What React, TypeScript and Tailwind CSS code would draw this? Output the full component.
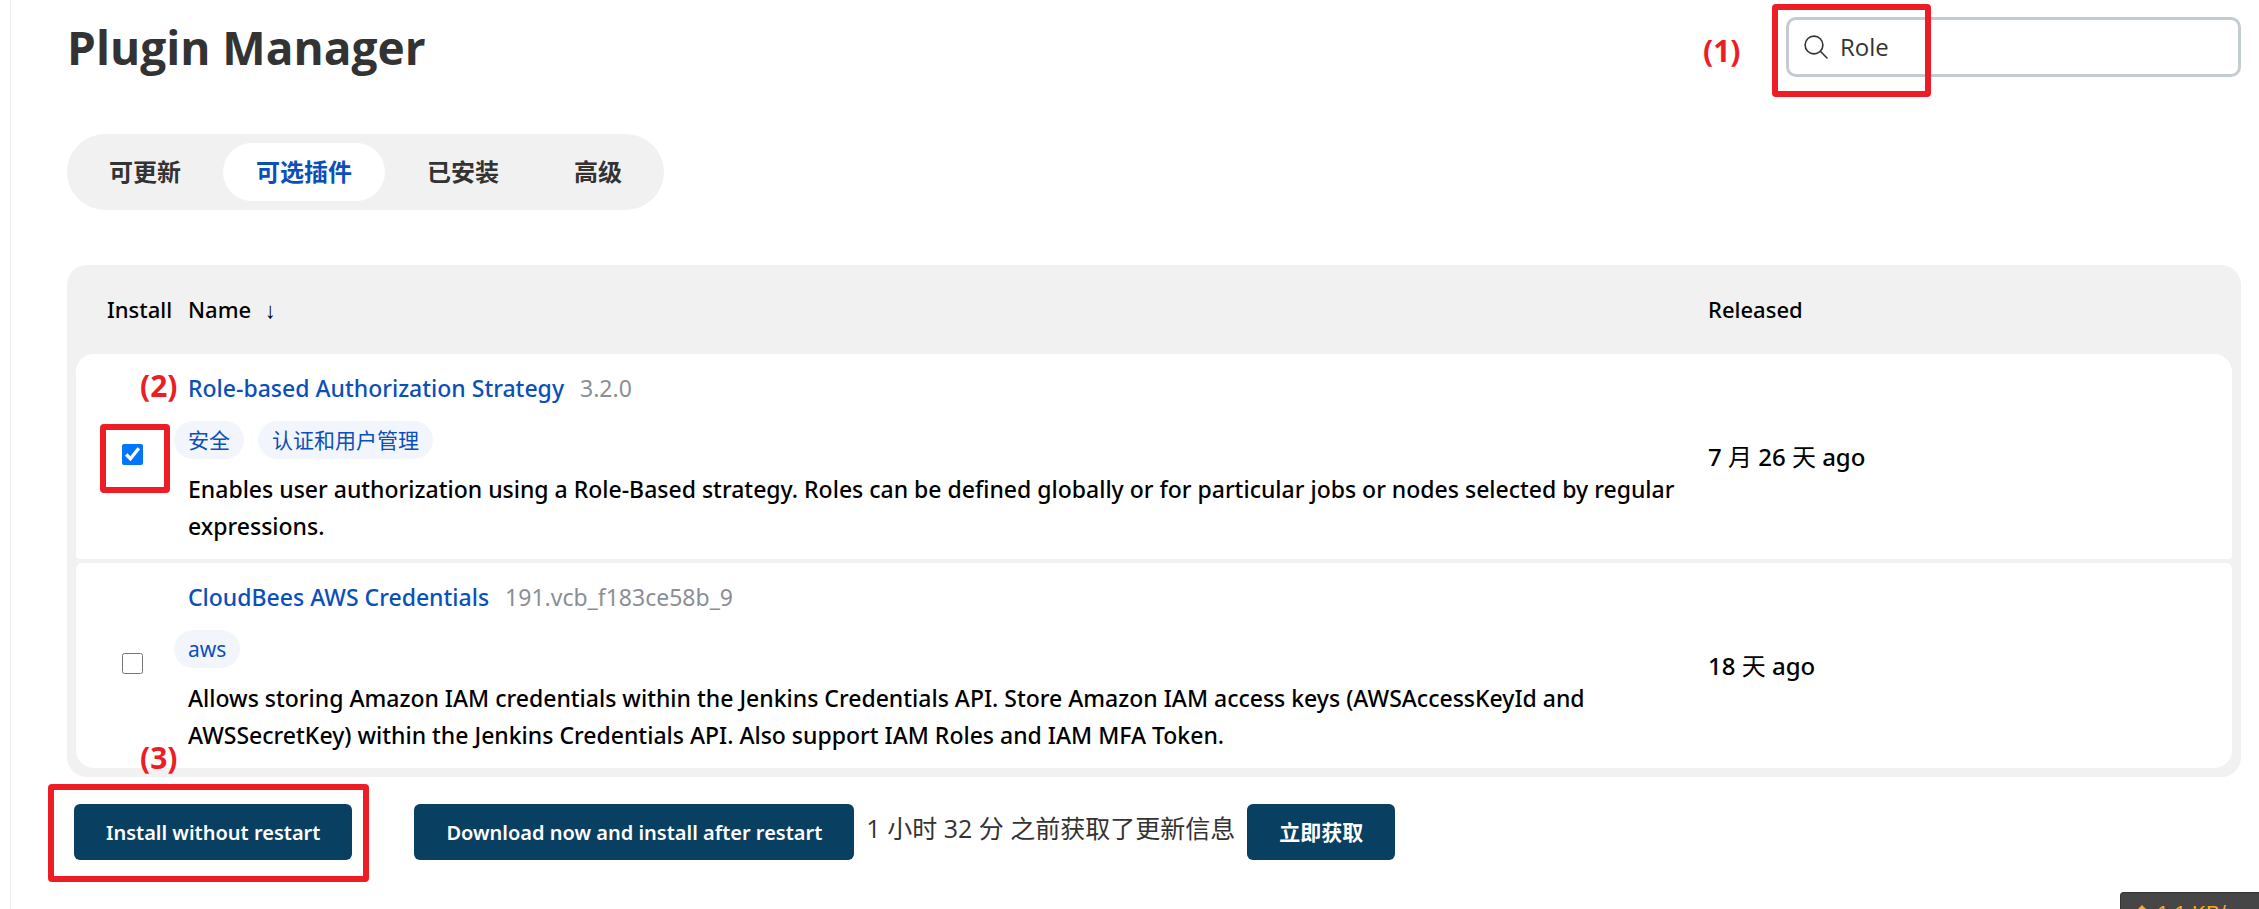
import { useState } from 'react';

type Plugin = {
  id: string;
  name: string;
  version: string;
  tags: string[];
  description: string;
  released: string;
  step?: string;
};

const plugins: Plugin[] = [
  {
    id: 'role-strategy',
    name: 'Role-based Authorization Strategy',
    version: '3.2.0',
    tags: ['安全', '认证和用户管理'],
    description:
      'Enables user authorization using a Role-Based strategy. Roles can be defined globally or for particular jobs or nodes selected by regular expressions.',
    released: '7 月 26 天 ago',
    step: '(2)',
  },
  {
    id: 'aws-credentials',
    name: 'CloudBees AWS Credentials',
    version: '191.vcb_f183ce58b_9',
    tags: ['aws'],
    description:
      'Allows storing Amazon IAM credentials within the Jenkins Credentials API. Store Amazon IAM access keys (AWSAccessKeyId and AWSSecretKey) within the Jenkins Credentials API. Also support IAM Roles and IAM MFA Token.',
    released: '18 天 ago',
  },
];

const tabs = ['可更新', '可选插件', '已安装', '高级'];

const frame = 'pointer-events-none absolute rounded-sm border-[6px] border-[#ee1c25]';
const step = 'pointer-events-none absolute text-[30px] leading-8 font-bold text-[#ee1c25]';
const action =
  "h-14 shrink-0 rounded-md bg-[#093f61] px-8 pt-0.5 font-['Noto_Sans','Noto_Sans_CJK_SC',sans-serif] whitespace-nowrap text-white";

// Units written in Chinese take the regular weight inside medium Latin text.
function Age({ text }: { text: string }) {
  return (
    <>
      {text.split(/([月天])/).map((part, i) =>
        i % 2 ? (
          <span key={i} className="font-['Noto_Sans_CJK_SC'] font-normal">{part}</span>
        ) : (
          part
        ),
      )}
    </>
  );
}

export default function App() {
  const [selected, setSelected] = useState<Record<string, boolean>>({ 'role-strategy': true });
  const [query, setQuery] = useState('Role');
  const [active, setActive] = useState('可选插件');

  return (
    <div className="relative flex h-screen overflow-hidden bg-white pl-[10px] font-['Open_Sans','Noto_Sans_CJK_SC',sans-serif] text-[#333]">
      <main className="min-w-0 flex-1 border-l border-[#eee] pr-[18px] pl-14">
        <header className="flex items-start justify-between pt-[17px]">
          <h1 className="text-[46px] leading-[60px] font-bold">Plugin Manager</h1>
          <div className="relative">
            <label className="flex h-[60px] w-[455px] items-center gap-3 rounded-[10px] border-[3px] border-[#c3ccd1] bg-white pl-[15px]">
              <svg viewBox="0 0 24 24" className="size-6 shrink-0" fill="none" stroke="#333" strokeWidth="1.6" strokeLinecap="round" aria-hidden="true">
                <circle cx="10" cy="10" r="8.9" />
                <path d="M16.3 16.3 23 23" />
              </svg>
              <input
                aria-label="Search"
                value={query}
                onChange={(e) => setQuery(e.target.value)}
                className="min-w-0 flex-1 bg-transparent text-[24px] outline-none"
              />
            </label>
            <span className={`${frame} -top-[13px] -left-[14px] h-[93px] w-[159px]`} />
            <span className={`${step} top-[18px] -left-[83px]`}>(1)</span>
          </div>
        </header>

        <nav className="mt-[57px] flex w-fit gap-[9px] rounded-full bg-[#f1f1f1] p-[9px]">
          {tabs.map((tab) => (
            <a
              key={tab}
              href="#"
              onClick={() => setActive(tab)}
              className={
                tab === active
                  ? 'rounded-full bg-white px-[33px] text-[24px] leading-[58px] font-bold text-[#0b4fba]'
                  : 'rounded-full px-[33px] text-[24px] leading-[58px] font-bold'
              }
            >
              {tab}
            </a>
          ))}
        </nav>

        <div className="mt-[55px] rounded-[20px] bg-[#f1f1f1] px-[9px] pb-[9px] font-['Noto_Sans','Noto_Sans_CJK_SC',sans-serif] text-[23px] leading-[37px] font-medium text-black">
          <table className="w-full border-separate border-spacing-0 text-left">
            <thead>
              <tr className="h-[89px] text-[22px]">
                <th className="w-[112px] pl-[31px] font-medium">Install</th>
                <th className="font-medium">
                  Name <span className="ml-2 font-['Liberation_Sans'] font-normal">↓</span>
                </th>
                <th className="w-[524px] font-medium">Released</th>
              </tr>
            </thead>
            <tbody>
              {plugins.map((p, i) => {
                const first = i === 0;
                return (
                  <tr key={p.id}>
                    <td
                      className={
                        first
                          ? 'relative rounded-tl-[18px] rounded-bl-md border-b-4 border-[#f1f1f1] bg-white bg-clip-padding pl-[46px]'
                          : 'relative rounded-tl-md rounded-bl-[18px] bg-white pl-[46px]'
                      }
                    >
                      <input
                        type="checkbox"
                        aria-label={p.name}
                        checked={!!selected[p.id]}
                        onChange={(e) => setSelected({ ...selected, [p.id]: e.target.checked })}
                        className="mb-1 block size-[21px] accent-[#0075ff]"
                      />
                      {p.step && (
                        <>
                          <span className={`${frame} top-[70px] left-6 h-[69px] w-[70px]`} />
                          <span className={`${step} top-4 left-16`}>{p.step}</span>
                        </>
                      )}
                    </td>
                    <td
                      className={
                        first
                          ? 'relative border-b-4 border-[#f1f1f1] bg-white bg-clip-padding pt-4 pb-3.5'
                          : 'relative bg-white pt-4 pb-3.5'
                      }
                    >
                      <div className="flex gap-4">
                        <a href="#" className="text-[#0b4fba]">{p.name}</a>
                        <span className="font-normal text-[#8b8f95]">{p.version}</span>
                      </div>
                      <div className="mt-3.5 mb-3 -ml-3.5 flex gap-3.5">
                        {p.tags.map((t) => (
                          <a key={t} href="#" className="rounded-full bg-[#f2f6fc] px-3.5 text-[21px] leading-[38px] font-normal text-[#0b4fba]">
                            {t}
                          </a>
                        ))}
                      </div>
                      <p>{p.description}</p>
                    </td>
                    <td
                      className={
                        first
                          ? 'rounded-tr-[18px] rounded-br-md border-b-4 border-[#f1f1f1] bg-white bg-clip-padding pb-0.5 text-[24px]'
                          : 'rounded-tr-md rounded-br-[18px] bg-white pb-0.5 text-[24px]'
                      }
                    >
                      <Age text={p.released} />
                    </td>
                  </tr>
                );
              })}
            </tbody>
          </table>
        </div>

        <div className="mt-[27px] ml-[7px] flex">
          <div className="relative mr-[62px]">
            <button type="button" className={`${action} text-[20px] font-semibold`}>Install without restart</button>
            <span className={`${frame} -top-5 -left-[26px] h-[98px] w-[321px]`} />
            <span className={`${step} -top-[62px] left-[66px]`}>(3)</span>
          </div>
          <button type="button" className={`${action} text-[20px] font-semibold`}>Download now and install after restart</button>
          <span className="mx-3 text-[25px] leading-[48px] whitespace-nowrap">1 小时 32 分 之前获取了更新信息</span>
          <button type="button" className={`${action} text-[21px] font-bold`}>立即获取</button>
        </div>
      </main>

      <div className="absolute right-0 bottom-0 flex h-[17px] w-[139px] gap-2 overflow-hidden rounded-tl-sm border-t border-l border-[#333] bg-[#464646] pt-2 pl-3.5 font-['Liberation_Sans',sans-serif] text-[21px] leading-6 whitespace-nowrap text-[#ffa51f]">
        <svg viewBox="0 0 14 18" className="mt-1 h-[18px] w-3.5 shrink-0" fill="currentColor" aria-hidden="true">
          <path d="M7 0 14 7H10V18H4V7H0Z" />
        </svg>
        <span>1.1 KB/s</span>
      </div>
    </div>
  );
}
